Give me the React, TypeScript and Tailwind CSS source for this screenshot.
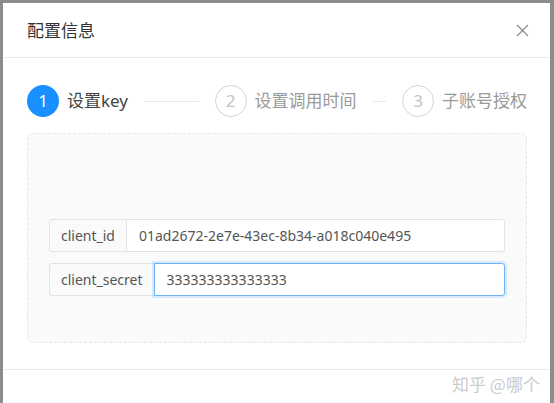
import React from "react";

const font = { fontFamily: '"Noto Sans", "Noto Sans CJK SC", sans-serif' };

function Step({ n, title, active, last }: { n: number; title: string; active?: boolean; last?: boolean }) {
  return (
    <div className={last ? "flex flex-none items-center" : "flex flex-1 items-center overflow-hidden mr-4 min-w-0"}>
      <div
        className={
          active
            ? "w-8 h-8 rounded-full bg-[#1890ff] text-white flex items-center justify-center text-[17px] flex-none"
            : "w-8 h-8 rounded-full border border-[#d4d4d4] text-[#c4c4c4] flex items-center justify-center text-[17px] flex-none"
        }
      >
        {n}
      </div>
      <div
        className={
          active
            ? "ml-2 text-[17px] text-[#444] whitespace-nowrap flex-none"
            : "ml-2 text-[17px] text-[#9a9a9a] whitespace-nowrap flex-none"
        }
      >
        {title}
      </div>
      {!last && <div className="ml-4 h-px bg-[#e8e8e8] flex-1 min-w-0" />}
    </div>
  );
}

export default function App() {
  return (
    <div className="w-[554px] h-[403px] bg-[#8c8c8c] pl-[3px] pt-[3px] pr-[4px] overflow-hidden" style={font}>
      <div className="relative bg-white h-[420px] flex flex-col">
        <div className="h-[55px] flex items-center justify-between pl-6 pr-[21px] border-b border-[#ebebeb] flex-none">
          <div className="text-[17px] text-[#333] leading-none">配置信息</div>
          <svg width="13" height="13" viewBox="0 0 13 13" className="text-[#8f8f8f]">
            <path d="M1 1L12 12M12 1L1 12" stroke="currentColor" strokeWidth="1.3" fill="none" />
          </svg>
        </div>
        <div className="pt-[27px] pb-[26px] pl-6 pr-[23px] border-b border-[#ebebeb] flex-none">
          <div className="flex items-center">
            <Step n={1} title="设置key" active />
            <Step n={2} title="设置调用时间" />
            <Step n={3} title="子账号授权" last />
          </div>
          <div className="mt-4 h-[210px] bg-[#fafafa] border border-dashed border-[#e6e6e6] rounded-md pt-[85px] px-[21px]">
            <div className="flex h-[33px] text-[14px] text-[#555]">
              <div className="flex items-center px-[11px] bg-[#fafafa] border border-[#e3e3e3] rounded-l-[3px]">client_id</div>
              <div className="flex-1 flex items-center px-[12px] bg-white border border-l-0 border-[#e3e3e3] rounded-r-[3px]">
                01ad2672-2e7e-43ec-8b34-a018c040e495
              </div>
            </div>
            <div className="flex h-[33px] mt-[11px] text-[14px] text-[#555]">
              <div className="flex items-center px-[11px] bg-[#fafafa] border border-r-0 border-[#e3e3e3] rounded-l-[3px]">client_secret</div>
              <div className="flex-1 flex items-center px-[12px] bg-white border border-[#6ab4f5] rounded-r-[3px] shadow-[0_0_0_2px_rgba(24,144,255,0.15)]">
                333333333333333
              </div>
            </div>
          </div>
        </div>
        <div className="absolute left-[449px] top-[368px] text-[17px] text-[#cbcbcb] whitespace-nowrap" style={{ fontFamily: '"Noto Sans CJK SC", sans-serif' }}>
          知乎 @哪个
        </div>
      </div>
    </div>
  );
}
